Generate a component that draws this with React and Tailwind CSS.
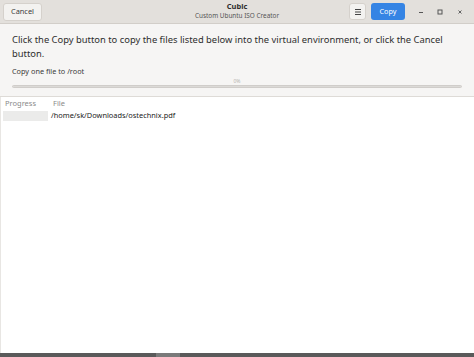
import React from 'react';

const App = () => {
  return (
    <div className="w-[474px] h-[357px] flex flex-col bg-white overflow-hidden" style={{ fontFamily: '"Noto Sans", "Open Sans", sans-serif' }}>
      {/* header bar */}
      <div className="h-[24px] flex items-center bg-[#e3e0dc] border-b border-[#d2cec9] relative shrink-0">
        <button className="ml-[3px] h-[18px] w-[39px] rounded-[3px] bg-[#f3f2f0] border border-[#d5d1cc] text-[7.4px] text-[#3d3d3d] flex items-center justify-center">
          Cancel
        </button>
        <div className="absolute left-1/2 -translate-x-1/2 top-[3px] flex flex-col items-center leading-none">
          <span className="text-[7.5px] font-bold text-[#2e2e2e]">Cubic</span>
          <span className="text-[6.4px] text-[#555] mt-[2px]">Custom Ubuntu ISO Creator</span>
        </div>
        <div className="ml-auto flex items-center h-full">
          <button className="h-[17px] w-[17px] rounded-[3px] bg-[#f3f2f0] border border-[#d5d1cc] flex items-center justify-center">
            <svg width="6" height="6" viewBox="0 0 6 6">
              <path d="M0 0.5h6M0 3h6M0 5.5h6" stroke="#444" strokeWidth="1" />
            </svg>
          </button>
          <button className="ml-[5px] h-[17px] w-[34px] rounded-[3px] bg-[#3584e4] text-white text-[7.2px] flex items-center justify-center">
            Copy
          </button>
          <div className="w-[69px] flex items-center justify-around pl-[6px] pr-[4px]">
            <svg width="6" height="6" viewBox="0 0 6 6"><path d="M1 3.5h4" stroke="#555" strokeWidth="1" /></svg>
            <svg width="6" height="6" viewBox="0 0 6 6"><rect x="1" y="1" width="4" height="4" fill="none" stroke="#555" strokeWidth="1" /></svg>
            <svg width="6" height="6" viewBox="0 0 6 6"><path d="M1.5 1.5l3 3M4.5 1.5l-3 3" stroke="#555" strokeWidth="0.9" /></svg>
          </div>
        </div>
      </div>

      {/* message area */}
      <div className="bg-[#f6f5f4] px-[12px] pt-[9px] pb-[8px] border-b border-[#dedbd7] shrink-0">
        <p className="text-[9.4px] leading-[14px] text-[#2e2e2e]">
          Click the Copy button to copy the files listed below into the virtual environment, or click the Cancel button.
        </p>
        <p className="mt-[6px] text-[7.3px] text-[#3a3a3a] leading-[9px]">Copy one file to /root</p>
        <div className="mt-[2px] text-center text-[5px] leading-[7px] text-[#b5b3b0]">0%</div>
        <div className="h-[3px] rounded-full bg-[#dcdad7] border border-[#d0cdca]"></div>
      </div>

      {/* table */}
      <div className="flex-1 bg-white border-l border-[#e8e6e3]">
        <div className="flex h-[10px] items-end text-[7.5px] text-[#8a8a8a] leading-none">
          <div className="w-[48px] pl-[4px]">Progress</div>
          <div className="pl-[4px]">File</div>
        </div>
        <div className="flex items-center mt-[3px] h-[11px]">
          <div className="ml-[2px] w-[45px] h-[10px] bg-[#ebebea]"></div>
          <div className="pl-[3px] text-[7.4px] text-[#222] leading-none">/home/sk/Downloads/ostechnix.pdf</div>
        </div>
      </div>

      {/* bottom strip */}
      <div className="h-[4px] bg-[#5a5a5a] flex shrink-0">
        <div className="ml-[156px] w-[24px] h-full bg-[#7a7a7a]"></div>
      </div>
    </div>
  );
};

export default App;
